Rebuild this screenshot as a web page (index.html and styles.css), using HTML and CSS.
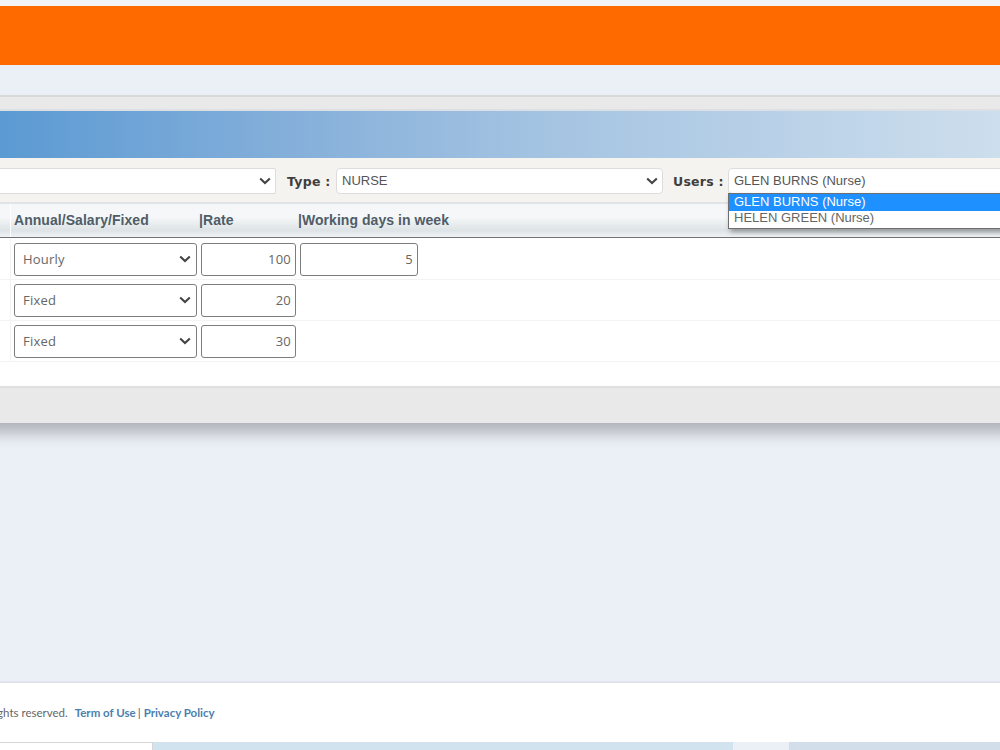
FILE: index.html
```html
<!DOCTYPE html>
<html lang="en">
<head>
<meta charset="utf-8">
<title>Rates</title>
<link rel="stylesheet" href="styles.css">
</head>
<body>
<div class="page">
  <div class="top-strip"></div>
  <header class="banner"></header>
  <nav class="subnav"></nav>
  <section class="panel">
    <div class="panel-cap"></div>
    <div class="panel-title"></div>
    <div class="filters">
      <select class="sel sel-first"><option></option></select>
      <label class="lbl lbl-type">Type :</label>
      <select class="sel sel-type"><option>NURSE</option></select>
      <label class="lbl lbl-users">Users :</label>
      <div class="users-wrap">
        <select class="sel sel-users"><option>GLEN BURNS (Nurse)</option></select>
        <ul class="dropdown">
          <li class="opt opt-on">GLEN BURNS (Nurse)</li>
          <li class="opt opt-off">HELEN GREEN (Nurse)</li>
        </ul>
      </div>
    </div>
    <div class="table">
      <div class="row head">
        <span>Annual/Salary/Fixed</span>
        <span>|Rate</span>
        <span>|Working days in week</span>
      </div>
      <div class="row">
        <select class="field"><option>Hourly</option></select>
        <input class="field num" value="100">
        <input class="field num" value="5">
      </div>
      <div class="row">
        <select class="field"><option>Fixed</option></select>
        <input class="field num" value="20">
      </div>
      <div class="row">
        <select class="field"><option>Fixed</option></select>
        <input class="field num" value="30">
      </div>
    </div>
    <div class="panel-foot"></div>
  </section>
  <div class="spacer"></div>
  <footer class="footer">
    <p class="legal">All rights reserved.<a class="link first-link">Term of Use</a><span class="pipe">|</span><a class="link">Privacy Policy</a></p>
  </footer>
  <div class="bottom">
    <div class="b1"></div>
    <div class="b2"></div>
    <div class="b3"></div>
    <div class="b4"></div>
  </div>
</div>
</body>
</html>
```
FILE: styles.css
```css
* { box-sizing: border-box; }
html, body { margin: 0; padding: 0; }
body { background: #ebeff6; font-family: "Liberation Sans", Arial, sans-serif; }
.page { width: 1000px; height: 750px; overflow: hidden; display: flex; flex-direction: column; background: #ebeff6; }
.top-strip { height: 6px; flex: none; background: #f2f3f5; }
.banner { height: 59px; flex: none; background: #ff6a00; }
.subnav { height: 30px; flex: none; background: #ebeff6; }

.panel { flex: none; width: 1040px; height: 328px; margin-left: -20px; padding: 0 20px; display: flex; flex-direction: column; border-top: 2px solid #d9d9d9; background: #e9e9e9; box-shadow: 0 12px 14px -2px rgba(0, 0, 0, 0.25); }
.panel-cap { height: 14px; flex: none; background: #e9e9e9; border-bottom: 2px solid #dcdfe3; }
.panel-title { height: 47px; flex: none; background: linear-gradient(90deg, #5b9ad3 0%, #86b0da 30%, #a5c4e2 55%, #cddeed 100%); }
.filters { height: 46px; flex: none; display: flex; align-items: flex-start; padding-top: 10px; background: #f5f3ef; border-bottom: 2px solid #dfe2e6; }
.sel, .field {
  appearance: none;
  background-color: #fff;
  background-image: url("data:image/svg+xml,%3Csvg xmlns='http://www.w3.org/2000/svg' width='12' height='8' viewBox='0 0 12 8'%3E%3Cpath d='M1.2 1.4 6 6l4.8-4.6' fill='none' stroke='%23444' stroke-width='2.1'/%3E%3C/svg%3E");
  background-repeat: no-repeat;
}
.sel { height: 26px; background-position: right 4px center; border: 1px solid #dcdcdc; border-radius: 4px; font: 13px "Liberation Sans", Arial, sans-serif; color: #555; padding: 0 0 2px 5px; flex: none; }
.sel-first { width: 286px; margin-left: -10px; border-radius: 0 2px 2px 0; }
.lbl { font: bold 12.5px "DejaVu Sans", Verdana, sans-serif; color: #3e3e3e; flex: none; padding-top: 6px; letter-spacing: 0.25px; }
.lbl-type { margin-left: 11px; width: 49px; }
.sel-type { width: 327px; }
.lbl-users { margin-left: 10px; width: 55px; }
.users-wrap { position: relative; flex: none; width: 330px; }
.sel-users { width: 330px; }
.dropdown { position: absolute; left: 0; top: 25px; width: 330px; margin: 0; padding: 0; list-style: none; background: #fff; border: 1px solid #6f6f6f; box-shadow: 2px 3px 5px rgba(0, 0, 0, 0.35); z-index: 2; }
.opt { height: 17px; padding-left: 5px; font-size: 13px; color: #666; }
.opt-on { background: #1e90ff; color: #fff; line-height: 15px; }
.opt-off { line-height: 13px; }

.table { height: 184px; flex: none; background: #fff; border-bottom: 2px solid #dfdfdf; }
.row { height: 41px; display: grid; grid-template-columns: 183px 95px 118px; column-gap: 4px; align-items: center; padding-left: 14px; border-bottom: 1px solid #f3f3f3; background: linear-gradient(#f3f3f3, #f3f3f3) 10px 0 / 1px 100% no-repeat; }
.row.head { height: 34px; margin-bottom: 1px; padding-bottom: 2px; column-gap: 3px; grid-template-columns: 182px 96px 200px; background: linear-gradient(#fff, #fff) 10px 0 / 1px 100% no-repeat, linear-gradient(180deg, #f4f6f7 0%, #f6f7f8 40%, #dde3e6 80%, #f0f2f4 100%); border-bottom: 1px solid #6f7377; font-size: 14px; font-weight: bold; color: #4f5d68; white-space: nowrap; letter-spacing: 0.05px; }
.field { height: 33px; width: 100%; border: 1px solid #7d7d7d; border-radius: 3px; font: 13px "Open Sans", "Noto Sans", sans-serif; color: #666; letter-spacing: 0.2px; }
select.field { padding-left: 8px; background-position: right 5px center; }
input.field { background-image: none; }
.num { text-align: right; padding: 0 4px 0 0; }

.panel-foot { flex: 1; background: #e9e9e9; }
.spacer { flex: 1; }
.footer { height: 61px; flex: none; background: #fff; border-top: 2px solid #e1e2ec; display: flex; align-items: center; }
.legal { margin: 0 0 0 -26px; font: 11.5px Lato, "Noto Sans", sans-serif; color: #666; white-space: nowrap; }
.link { color: #4a7fb0; font-weight: bold; }
.first-link { margin-left: 7px; }
.pipe { color: #3d5f80; margin: 0 3px 0 2px; }

.bottom { height: 8px; flex: none; display: flex; }
.b1 { width: 153px; background: #fff; border-top: 1px solid #d5d5d5; border-right: 1px solid #d5d5d5; }
.b2 { width: 580px; background: #d0e3ee; }
.b3 { width: 56px; background: #ebeff6; }
.b4 { flex: 1; background: #d2dfeb; }
```
